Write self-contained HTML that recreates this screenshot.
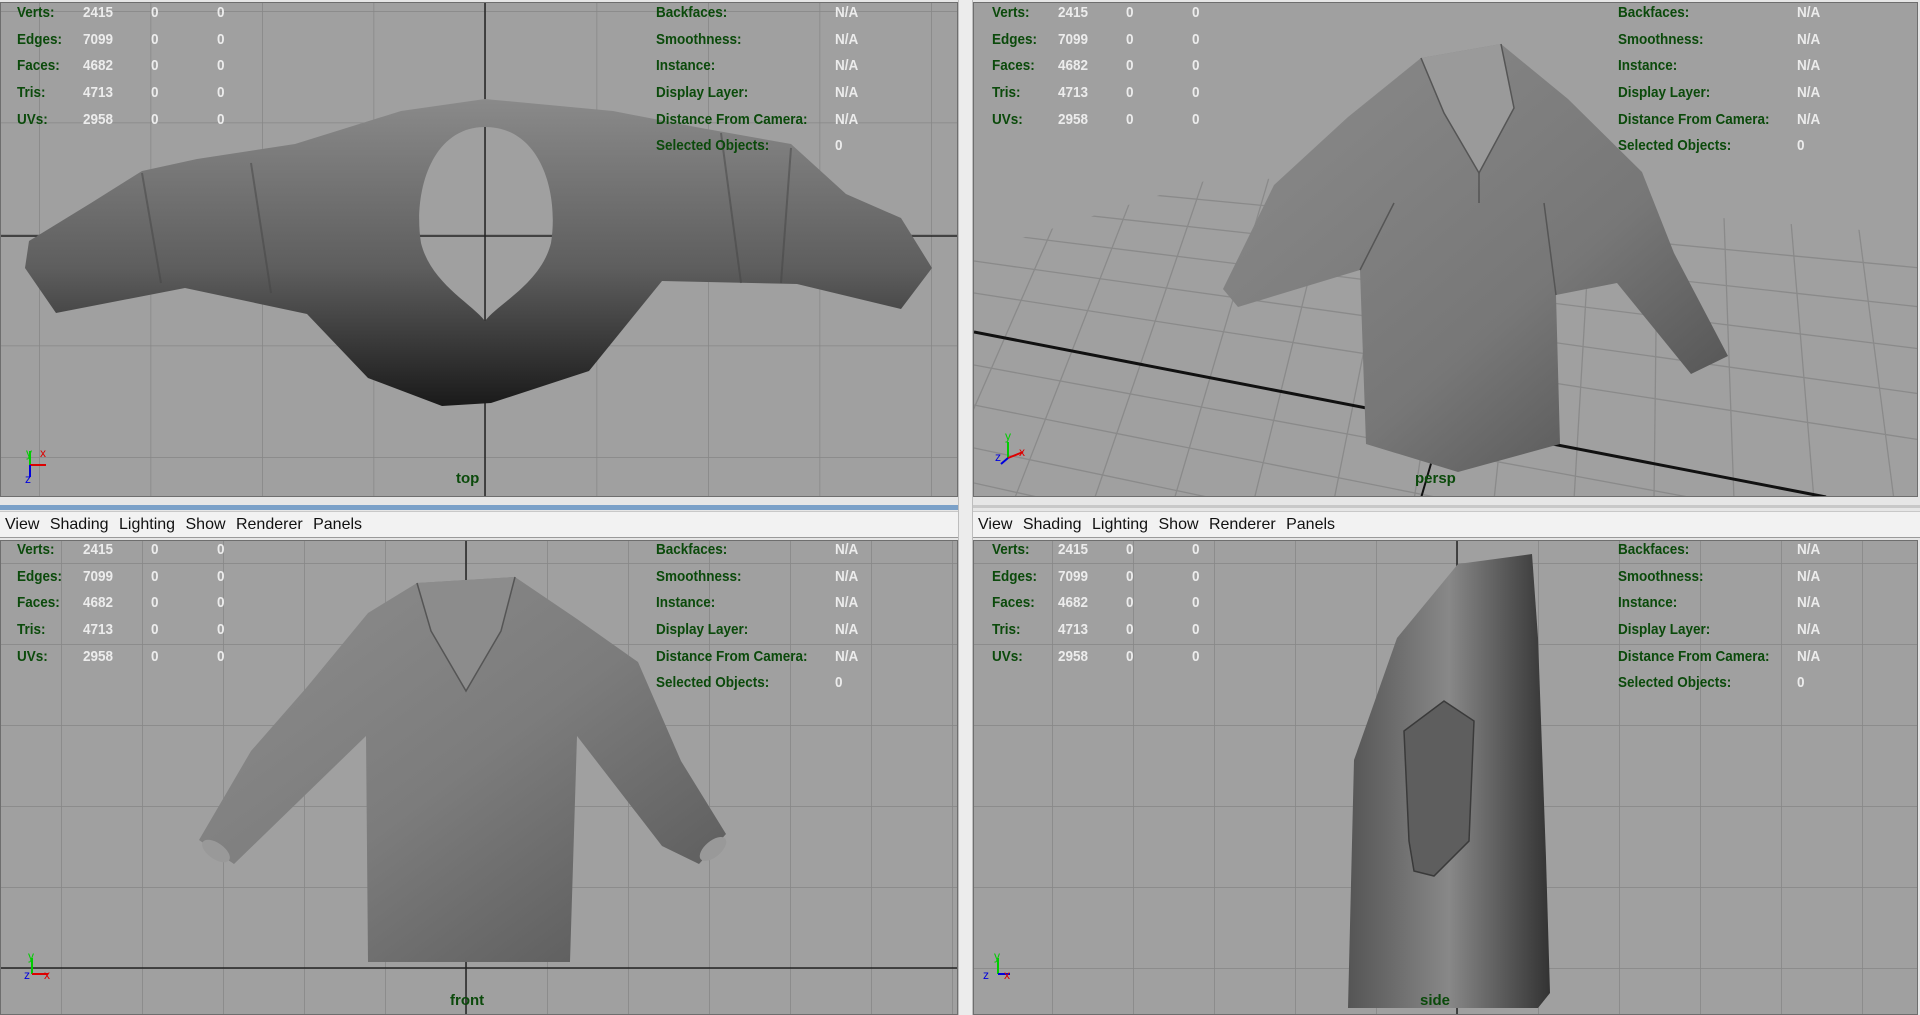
<!DOCTYPE html>
<html><head><meta charset="utf-8"><style>
*{margin:0;padding:0;box-sizing:border-box}
body{width:1920px;height:1015px;background:#e6e6e6;position:relative;overflow:hidden;font-family:"Liberation Sans Narrow","Liberation Sans",sans-serif}
.vp{position:absolute;background:#a0a0a0;border:1px solid #6e6e6e;overflow:hidden}
.vp svg{position:absolute;left:0;top:0}
.t{position:absolute;font-weight:bold;font-size:15px;line-height:16px;white-space:nowrap;transform:scaleX(.9);transform-origin:left}
.g{color:#0b4a0b}.w{color:#ececec}
.menu{position:absolute;height:27px;background:#f2f2f2;border-top:1px solid #c8c8c8;border-bottom:1px solid #9a9a9a;font-size:16px;line-height:26px;color:#111;padding-left:5px;word-spacing:6px}
.lbl{position:absolute;font-size:15px;color:#0b4a0b;font-weight:bold}
.r0{top:5px}.r1{top:32px}.r2{top:58px}.r3{top:85px}.r4{top:112px}.r5{top:138px}
.b0{top:542px}.b1{top:569px}.b2{top:595px}.b3{top:622px}.b4{top:649px}.b5{top:675px}
</style></head><body>

<div style="position:absolute;left:958px;top:0;width:15px;height:1015px;background:#ececec;border-left:1px solid #bdbdbd;border-right:1px solid #bdbdbd"></div>
<div style="position:absolute;left:0;top:505px;width:958px;height:5px;background:#7aa0c8"></div>
<div style="position:absolute;left:973px;top:505px;width:947px;height:3px;background:#c8c8c8"></div>

<div class="vp" style="left:0;top:2px;width:958px;height:495px">
<svg width="958" height="495">
<defs>
<pattern id="g1" width="111.5" height="111.5" patternUnits="userSpaceOnUse" x="38" y="8"><path d="M0 0V111.5M0 0H111.5" stroke="#868686" stroke-width="1.5" fill="none"/></pattern>
<linearGradient id="s1" x1="0" y1="0" x2="0" y2="1"><stop offset="0" stop-color="#8a8a8a"/><stop offset=".55" stop-color="#5e5e5e"/><stop offset="1" stop-color="#1a1a1a"/></linearGradient>
</defs>
<rect width="958" height="495" fill="url(#g1)"/>
<path d="M0 233H958M484 0V495" stroke="#222" stroke-width="1.5"/>
<path fill-rule="evenodd" fill="url(#s1)" d="M28 238 L90 200 L141 168 L196 156 L294 141 L400 108 L484 96 L612 108 L700 125 L790 141 L845 191 L900 215 L931 265 L900 306 L796 281 L661 278 L588 368 L490 400 L441 403 L367 375 L306 311 L184 285 L55 310 L24 265 Z
M484 124 C430 124 412 190 420 240 C430 280 470 300 484 318 C498 300 540 280 550 240 C558 190 540 124 484 124 Z"/>
<path d="M141 170 L160 280 M250 160 L270 290 M790 145 L780 280 M720 130 L740 280" stroke="#444" stroke-width="2" fill="none" opacity=".5"/>
</svg>
</div>

<div class="vp" style="left:973px;top:2px;width:945px;height:495px">
<svg width="945" height="495">
<defs>
<clipPath id="cp"><polygon points="0,250 250,172 945,232 945,495 0,495"/></clipPath>
<linearGradient id="s2" x1="0" y1="0" x2="1" y2="1"><stop offset="0" stop-color="#8c8c8c"/><stop offset=".6" stop-color="#777"/><stop offset="1" stop-color="#4a4a4a"/></linearGradient>
</defs>
<g clip-path="url(#cp)" stroke="#8a8a8a" stroke-width="1.3" fill="none">
<path d="M0 150L947 226M0 175L947 265M0 200L947 304M0 228L947 346M0 258L947 391M0 290L947 437M0 362L947 537M0 402L947 591M0 445L947 644M0 480L947 690"/>
<path d="M700 -1200L-600 497M700 -1200L-520 497M700 -1200L-440 497M700 -1200L-360 497M700 -1200L-280 497M700 -1200L-200 497M700 -1200L-120 497M700 -1200L-40 497M700 -1200L40 497M700 -1200L120 497M700 -1200L200 497M700 -1200L280 497M700 -1200L360 497M700 -1200L440 497M700 -1200L520 497M700 -1200L600 497M700 -1200L680 497M700 -1200L760 497M700 -1200L840 497M700 -1200L920 497M700 -1200L1000 497M700 -1200L1080 497M700 -1200L1160 497M700 -1200L1240 497M700 -1200L1320 497M700 -1200L1400 497M700 -1200L1480 497M700 -1200L1560 497M700 -1200L1640 497M700 -1200L1720 497"/>
</g>
<path d="M0 329L852 494" stroke="#111" stroke-width="3"/>
<path d="M447 495L463 440" stroke="#111" stroke-width="2"/>
<path fill="url(#s2)" d="M447 55 L527 41 L594 96 L668 169 L700 250 L754 353 L717 371 L643 280 L582 292 L586 441 L484 469 L392 441 L386 267 L264 304 L249 286 L300 182 L374 114 Z"/>
<path d="M447 55 L470 110 L505 170 L540 105 L527 41" fill="#9a9a9a" stroke="#555" stroke-width="1.5"/>
<path d="M505 170 L505 200 M386 267 L420 200 M582 292 L570 200" stroke="#555" stroke-width="1.5" fill="none"/>
</svg>
</div>

<div class="menu" style="left:0;top:511px;width:958px">View Shading Lighting Show Renderer Panels</div>
<div class="menu" style="left:973px;top:511px;width:947px">View Shading Lighting Show Renderer Panels</div>

<div class="vp" style="left:0;top:540px;width:958px;height:475px">
<svg width="958" height="475">
<defs>
<pattern id="g3" width="81" height="81" patternUnits="userSpaceOnUse" x="60" y="22"><path d="M0 0V81M0 0H81" stroke="#868686" stroke-width="1.5" fill="none"/></pattern>
<linearGradient id="s3" x1="0" y1="0" x2="1" y2="1"><stop offset="0" stop-color="#8e8e8e"/><stop offset=".5" stop-color="#7c7c7c"/><stop offset="1" stop-color="#555"/></linearGradient>
</defs>
<rect width="958" height="475" fill="url(#g3)"/>
<path d="M0 427H958M465 0V475" stroke="#222" stroke-width="1.5"/>
<path fill="url(#s3)" d="M416 42 L514 36 L576 78 L637 121 L680 220 L725 293 L698 323 L661 305 L576 195 L569 421 L367 421 L365 195 L233 323 L198 299 L250 210 L306 146 L367 72 Z"/>
<path d="M416 42 L430 90 L465 150 L500 90 L514 36" fill="#8c8c8c" stroke="#555" stroke-width="1.5"/>
<ellipse cx="215" cy="310" rx="16" ry="8" fill="#999" transform="rotate(35 215 310)"/>
<ellipse cx="712" cy="308" rx="16" ry="8" fill="#999" transform="rotate(-40 712 308)"/>
</svg>
</div>

<div class="vp" style="left:973px;top:540px;width:945px;height:475px">
<svg width="945" height="475">
<defs>
<pattern id="g4" width="81" height="81" patternUnits="userSpaceOnUse" x="78" y="22"><path d="M0 0V81M0 0H81" stroke="#868686" stroke-width="1.5" fill="none"/></pattern>
<linearGradient id="s4" x1="0" y1="0" x2="1" y2="0"><stop offset="0" stop-color="#555"/><stop offset=".5" stop-color="#888"/><stop offset="1" stop-color="#333"/></linearGradient>
</defs>
<rect width="945" height="475" fill="url(#g4)"/>
<path d="M483 0V475" stroke="#222" stroke-width="1.5"/>
<path fill="url(#s4)" d="M484 23 L558 13 L564 97 L572 317 L576 452 L564 467 L374 467 L380 219 L423 97 Z"/>
<path d="M430 190 L470 160 L500 180 L495 300 L460 335 L440 330 L435 300 Z" fill="#5e5e5e" stroke="#3a3a3a" stroke-width="1.5"/>
</svg>
</div>

<div style="position:absolute;left:0;top:0">
<div class="t g r0" style="left:17px">Verts:</div><div class="t w r0" style="left:83px">2415</div><div class="t w r0" style="left:151px">0</div><div class="t w r0" style="left:217px">0</div>
<div class="t g r1" style="left:17px">Edges:</div><div class="t w r1" style="left:83px">7099</div><div class="t w r1" style="left:151px">0</div><div class="t w r1" style="left:217px">0</div>
<div class="t g r2" style="left:17px">Faces:</div><div class="t w r2" style="left:83px">4682</div><div class="t w r2" style="left:151px">0</div><div class="t w r2" style="left:217px">0</div>
<div class="t g r3" style="left:17px">Tris:</div><div class="t w r3" style="left:83px">4713</div><div class="t w r3" style="left:151px">0</div><div class="t w r3" style="left:217px">0</div>
<div class="t g r4" style="left:17px">UVs:</div><div class="t w r4" style="left:83px">2958</div><div class="t w r4" style="left:151px">0</div><div class="t w r4" style="left:217px">0</div>
<div class="t g r0" style="left:656px">Backfaces:</div><div class="t w r0" style="left:835px">N/A</div>
<div class="t g r1" style="left:656px">Smoothness:</div><div class="t w r1" style="left:835px">N/A</div>
<div class="t g r2" style="left:656px">Instance:</div><div class="t w r2" style="left:835px">N/A</div>
<div class="t g r3" style="left:656px">Display Layer:</div><div class="t w r3" style="left:835px">N/A</div>
<div class="t g r4" style="left:656px">Distance From Camera:</div><div class="t w r4" style="left:835px">N/A</div>
<div class="t g r5" style="left:656px">Selected Objects:</div><div class="t w r5" style="left:835px">0</div>
</div>
<div style="position:absolute;left:975px;top:0">
<div class="t g r0" style="left:17px">Verts:</div><div class="t w r0" style="left:83px">2415</div><div class="t w r0" style="left:151px">0</div><div class="t w r0" style="left:217px">0</div>
<div class="t g r1" style="left:17px">Edges:</div><div class="t w r1" style="left:83px">7099</div><div class="t w r1" style="left:151px">0</div><div class="t w r1" style="left:217px">0</div>
<div class="t g r2" style="left:17px">Faces:</div><div class="t w r2" style="left:83px">4682</div><div class="t w r2" style="left:151px">0</div><div class="t w r2" style="left:217px">0</div>
<div class="t g r3" style="left:17px">Tris:</div><div class="t w r3" style="left:83px">4713</div><div class="t w r3" style="left:151px">0</div><div class="t w r3" style="left:217px">0</div>
<div class="t g r4" style="left:17px">UVs:</div><div class="t w r4" style="left:83px">2958</div><div class="t w r4" style="left:151px">0</div><div class="t w r4" style="left:217px">0</div>
<div class="t g r0" style="left:643px">Backfaces:</div><div class="t w r0" style="left:822px">N/A</div>
<div class="t g r1" style="left:643px">Smoothness:</div><div class="t w r1" style="left:822px">N/A</div>
<div class="t g r2" style="left:643px">Instance:</div><div class="t w r2" style="left:822px">N/A</div>
<div class="t g r3" style="left:643px">Display Layer:</div><div class="t w r3" style="left:822px">N/A</div>
<div class="t g r4" style="left:643px">Distance From Camera:</div><div class="t w r4" style="left:822px">N/A</div>
<div class="t g r5" style="left:643px">Selected Objects:</div><div class="t w r5" style="left:822px">0</div>
</div>
<div style="position:absolute;left:0;top:0">
<div class="t g b0" style="left:17px">Verts:</div><div class="t w b0" style="left:83px">2415</div><div class="t w b0" style="left:151px">0</div><div class="t w b0" style="left:217px">0</div>
<div class="t g b1" style="left:17px">Edges:</div><div class="t w b1" style="left:83px">7099</div><div class="t w b1" style="left:151px">0</div><div class="t w b1" style="left:217px">0</div>
<div class="t g b2" style="left:17px">Faces:</div><div class="t w b2" style="left:83px">4682</div><div class="t w b2" style="left:151px">0</div><div class="t w b2" style="left:217px">0</div>
<div class="t g b3" style="left:17px">Tris:</div><div class="t w b3" style="left:83px">4713</div><div class="t w b3" style="left:151px">0</div><div class="t w b3" style="left:217px">0</div>
<div class="t g b4" style="left:17px">UVs:</div><div class="t w b4" style="left:83px">2958</div><div class="t w b4" style="left:151px">0</div><div class="t w b4" style="left:217px">0</div>
<div class="t g b0" style="left:656px">Backfaces:</div><div class="t w b0" style="left:835px">N/A</div>
<div class="t g b1" style="left:656px">Smoothness:</div><div class="t w b1" style="left:835px">N/A</div>
<div class="t g b2" style="left:656px">Instance:</div><div class="t w b2" style="left:835px">N/A</div>
<div class="t g b3" style="left:656px">Display Layer:</div><div class="t w b3" style="left:835px">N/A</div>
<div class="t g b4" style="left:656px">Distance From Camera:</div><div class="t w b4" style="left:835px">N/A</div>
<div class="t g b5" style="left:656px">Selected Objects:</div><div class="t w b5" style="left:835px">0</div>
</div>
<div style="position:absolute;left:975px;top:0">
<div class="t g b0" style="left:17px">Verts:</div><div class="t w b0" style="left:83px">2415</div><div class="t w b0" style="left:151px">0</div><div class="t w b0" style="left:217px">0</div>
<div class="t g b1" style="left:17px">Edges:</div><div class="t w b1" style="left:83px">7099</div><div class="t w b1" style="left:151px">0</div><div class="t w b1" style="left:217px">0</div>
<div class="t g b2" style="left:17px">Faces:</div><div class="t w b2" style="left:83px">4682</div><div class="t w b2" style="left:151px">0</div><div class="t w b2" style="left:217px">0</div>
<div class="t g b3" style="left:17px">Tris:</div><div class="t w b3" style="left:83px">4713</div><div class="t w b3" style="left:151px">0</div><div class="t w b3" style="left:217px">0</div>
<div class="t g b4" style="left:17px">UVs:</div><div class="t w b4" style="left:83px">2958</div><div class="t w b4" style="left:151px">0</div><div class="t w b4" style="left:217px">0</div>
<div class="t g b0" style="left:643px">Backfaces:</div><div class="t w b0" style="left:822px">N/A</div>
<div class="t g b1" style="left:643px">Smoothness:</div><div class="t w b1" style="left:822px">N/A</div>
<div class="t g b2" style="left:643px">Instance:</div><div class="t w b2" style="left:822px">N/A</div>
<div class="t g b3" style="left:643px">Display Layer:</div><div class="t w b3" style="left:822px">N/A</div>
<div class="t g b4" style="left:643px">Distance From Camera:</div><div class="t w b4" style="left:822px">N/A</div>
<div class="t g b5" style="left:643px">Selected Objects:</div><div class="t w b5" style="left:822px">0</div>
</div>

<div class="lbl" style="left:456px;top:470px">top</div>
<div class="lbl" style="left:1415px;top:470px">persp</div>
<div class="lbl" style="left:450px;top:992px">front</div>
<div class="lbl" style="left:1420px;top:992px">side</div>

<svg style="position:absolute;left:20px;top:445px" width="40" height="40"><path d="M10 20V6" stroke="#0c0" stroke-width="2"/><path d="M10 20H26" stroke="#d00" stroke-width="2"/><path d="M10 20V32" stroke="#00d" stroke-width="2"/><text x="20" y="12" fill="#d00" font-size="12" font-family="Liberation Sans">x</text><text x="6" y="12" fill="#0c0" font-size="12" font-family="Liberation Sans">y</text><text x="5" y="38" fill="#00d" font-size="12" font-family="Liberation Sans">z</text></svg>
<svg style="position:absolute;left:993px;top:430px" width="40" height="40"><path d="M15 28V12" stroke="#0c0" stroke-width="2"/><path d="M15 28L30 22" stroke="#d00" stroke-width="2"/><path d="M15 28L8 34" stroke="#00d" stroke-width="2"/><text x="26" y="26" fill="#d00" font-size="12" font-family="Liberation Sans">x</text><text x="12" y="10" fill="#0c0" font-size="12" font-family="Liberation Sans">y</text><text x="2" y="31" fill="#00d" font-size="12" font-family="Liberation Sans">z</text></svg>
<svg style="position:absolute;left:22px;top:948px" width="40" height="40"><path d="M10 26V10" stroke="#0c0" stroke-width="2"/><path d="M10 26H26" stroke="#d00" stroke-width="2"/><text x="22" y="31" fill="#d00" font-size="12" font-family="Liberation Sans">x</text><text x="6" y="12" fill="#0c0" font-size="12" font-family="Liberation Sans">y</text><text x="2" y="31" fill="#00d" font-size="12" font-family="Liberation Sans">z</text></svg>
<svg style="position:absolute;left:980px;top:948px" width="40" height="40"><path d="M18 26V10" stroke="#0c0" stroke-width="2"/><path d="M18 26H30" stroke="#00d" stroke-width="2"/><text x="24" y="31" fill="#d00" font-size="12" font-family="Liberation Sans">x</text><text x="14" y="12" fill="#0c0" font-size="12" font-family="Liberation Sans">y</text><text x="3" y="31" fill="#00d" font-size="12" font-family="Liberation Sans">z</text></svg>
</body></html>
